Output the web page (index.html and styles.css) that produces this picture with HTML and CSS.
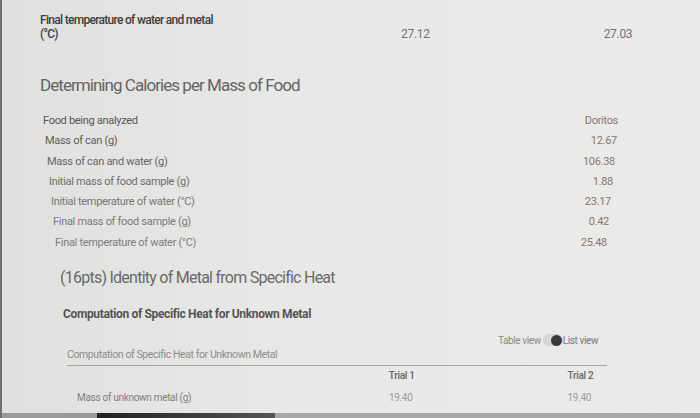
FILE: index.html
```html
<!DOCTYPE html>
<html>
<head>
<meta charset="utf-8">
<link rel="stylesheet" href="styles.css">
</head>
<body>
<div class="screen">
  <div class="page">
    <div class="toprow">
      <div class="toplabel">Final temperature of water and metal<br>(°C)</div>
      <div class="topval v1">27.12</div>
      <div class="topval v2">27.03</div>
    </div>

    <h2 class="sec">Determining Calories per Mass of Food</h2>

    <div class="list">
      <div class="row r1"><span>Food being analyzed</span><span class="val">Doritos</span></div>
      <div class="row r2"><span>Mass of can (g)</span><span class="val">12.67</span></div>
      <div class="row r3"><span>Mass of can and water (g)</span><span class="val">106.38</span></div>
      <div class="row r4"><span>Initial mass of food sample (g)</span><span class="val">1.88</span></div>
      <div class="row r5"><span>Initial temperature of water (°C)</span><span class="val">23.17</span></div>
      <div class="row r6"><span>Final mass of food sample (g)</span><span class="val">0.42</span></div>
      <div class="row r7"><span>Final temperature of water (°C)</span><span class="val">25.48</span></div>
    </div>

    <h2 class="sec sec2">(16pts) Identity of Metal from Specific Heat</h2>
    <div class="sub">Computation of Specific Heat for Unknown Metal</div>

    <div class="toggle">
      <span>Table view</span>
      <span class="switch"><span class="knob"></span></span>
      <span class="lv">List view</span>
    </div>

    <div class="tbl">
      <div class="caption">Computation of Specific Heat for Unknown Metal</div>
      <div class="thead"><span class="c0"></span><span class="c1">Trial 1</span><span class="c2">Trial 2</span></div>
      <div class="trow"><span class="c0">Mass of unknown metal (g)</span><span class="c1">19.40</span><span class="c2">19.40</span></div>
    </div>
  </div>
  <div class="bottom"><span class="dark"></span><span class="mid"></span></div>
</div>
</body>
</html>
```

FILE: styles.css
```css
* { box-sizing: border-box; }
html, body { margin: 0; padding: 0; }
body {
  width: 700px;
  height: 418px;
  overflow: hidden;
  font-family: Roboto, "Liberation Sans", sans-serif;
  background: #e6e6e4;
}
.screen {
  width: 700px;
  height: 418px;
  display: flex;
  flex-direction: column;
  border-left: 2px solid #707070;
  background: linear-gradient(90deg, #e0e0df 0%, #e8e8e6 40%, #ebebe9 100%);
}
.page {
  flex: 1;
  padding: 13px 0 0 38px;
}
.toprow {
  display: flex;
  align-items: flex-start;
  height: 55px;
}
.toplabel {
  font-size: 12px;
  line-height: 14px;
  color: #3e3e3e;
  font-weight: 500;
  width: 361px;
  letter-spacing: -0.7px;
}
.topval {
  font-size: 12px;
  color: #7b6f72;
  padding-top: 14px;
  letter-spacing: -0.3px;
}
.v2 { margin-left: 174px; }
.sec {
  margin: 7px 0 0 0;
  font-size: 17px;
  font-weight: 400;
  color: #646464;
  letter-spacing: -0.95px;
  line-height: 20px;
}
.list {
  margin-top: 19px;
  width: 578px;
}
.row {
  display: flex;
  justify-content: space-between;
  font-size: 11px;
  height: 20.3px;
  line-height: 14px;
  color: #555;
  letter-spacing: -0.3px;
}
.row .val { color: #8a7475; }
.r1 { padding-left: 3px; padding-right: 0; }
.r2 { padding-left: 5px; padding-right: 1px; color: #5c5c5c; }
.r3 { padding-left: 7px; padding-right: 3px; color: #666; }
.r4 { padding-left: 9px; padding-right: 5px; color: #6d6d6d; }
.r5 { padding-left: 11px; padding-right: 7px; color: #777; }
.r6 { padding-left: 13px; padding-right: 9px; color: #7a7a7a; }
.r7 { padding-left: 15px; padding-right: 11px; color: #7e7e7e; }
.sec2 {
  margin: 12px 0 0 20px;
  font-size: 16px;
  color: #6a6a6a;
  letter-spacing: -0.75px;
}
.sub {
  margin: 19px 0 0 23px;
  font-size: 12px;
  font-weight: 700;
  color: #555;
  letter-spacing: -0.35px;
}
.toggle {
  display: flex;
  align-items: center;
  gap: 2px;
  margin: 13px 0 0 458px;
  font-size: 10px;
  color: #8a8a8a;
  letter-spacing: -0.4px;
}
.switch {
  width: 20px;
  height: 12px;
  border-radius: 6px;
  background: #d8d8d8;
  border: 1px solid #cfcfcf;
  display: flex;
  justify-content: flex-end;
  align-items: center;
}
.knob {
  width: 11px;
  height: 11px;
  border-radius: 50%;
  background: #3a3a3a;
}
.lv { color: #7a7a7a; margin-left: -2px; }
.tbl {
  margin: 2px 0 0 27px;
  width: 540px;
}
.caption {
  font-size: 10.5px;
  color: #8d8d8d;
  padding-bottom: 4px;
  border-bottom: 1px solid #a5a5a5;
  letter-spacing: -0.4px;
}
.thead, .trow {
  display: flex;
  font-size: 10px;
  letter-spacing: -0.3px;
}
.thead { height: 15px; align-items: flex-end; color: #666; font-weight: 500; }
.trow { height: 32px; align-items: center; color: #9a9a9a; }
.trow .c0 { color: #7f7f7f; padding-left: 10px; }
.c0 { width: 326px; }
.c1 { width: 181px; }
.c2 { width: 40px; }
.bottom {
  height: 5px;
  display: flex;
  background: #9a9a9a;
}
.bottom .dark {
  margin-left: 95px;
  width: 178px;
  background: linear-gradient(90deg, #222, #555);
}
.bottom .mid { flex: 1; background: #a8a8a8; }
```
